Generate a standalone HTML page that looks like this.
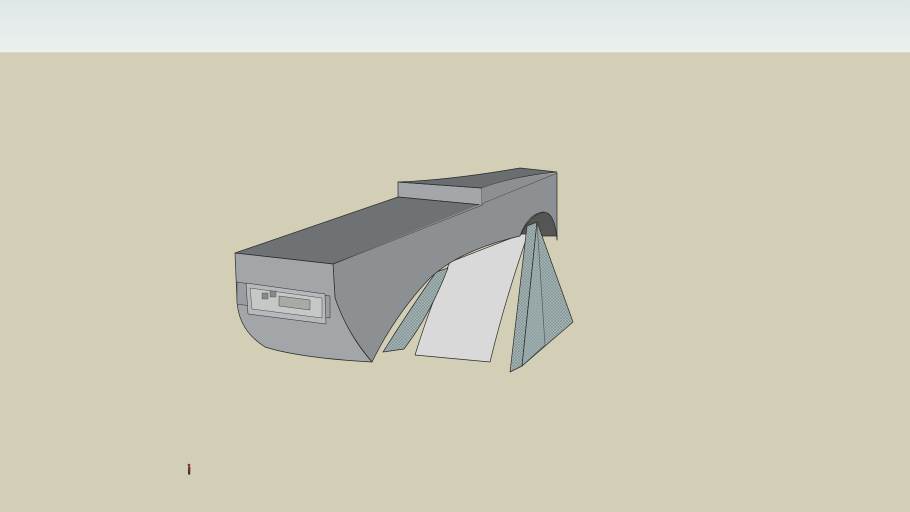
<!DOCTYPE html>
<html><head><style>
html,body{margin:0;padding:0;width:910px;height:512px;overflow:hidden;background:#d2cfb6;}
</style></head><body>
<svg width="910" height="512" viewBox="0 0 910 512" xmlns="http://www.w3.org/2000/svg">
<defs>
<linearGradient id="sky" x1="0" y1="0" x2="0" y2="1"><stop offset="0" stop-color="#dfe7e6"/><stop offset="1" stop-color="#ebf0ef"/></linearGradient>
<pattern id="hatch" width="3" height="3" patternUnits="userSpaceOnUse"><rect width="3" height="3" fill="#a9b8b8"/><path d="M0 0L3 3M3 0L0 3" stroke="#7f9090" stroke-width="0.6"/></pattern>
</defs>
<rect x="0" y="0" width="910" height="52" fill="url(#sky)"/>
<rect x="0" y="52" width="910" height="1" fill="#d8d8cc"/>
<rect x="0" y="53" width="910" height="459" fill="#d2cfb6"/>
<g stroke="#2a2a2a" stroke-width="0.7" stroke-linejoin="round">
<path d="M520 236 Q530 214 545 212 Q556 214 557 240 L557 236 Z" fill="#555"/>
<!-- white central panel -->
<path d="M415 355 Q432 300 450 262 L522 234 L528 234 Q505 300 490 362 Z" fill="#d9d9d9"/>
<!-- left hatched sail -->
<path d="M383 352 L404 349 Q430 315 448 268 L436 272 Q408 312 383 352 Z" fill="url(#hatch)"/>
<!-- right pyramid -->
<path d="M510 372 L522 366 L537 222 L527 226 Z" fill="url(#hatch)"/>
<path d="M522 366 L573 322 L537 222 Z" fill="url(#hatch)"/>
<path d="M522 366 L545 345 L537 222 Z" fill="#9aabab" opacity="0.6"/>
<!-- right side face -->
<path d="M333 264 L557 173 L557 240 Q555 212 543 212 Q528 214 520 236 Q460 250 430 278 Q395 315 372 362 Q345 330 335 298 Z" fill="#8c9093"/>
<!-- raised block -->
<path d="M398 182 L482 188 L482 205 L398 197 Z" fill="#a3a7aa"/>
<path d="M398 182 Q450 180 520 168 L557 172 Q515 176 482 188 Z" fill="#6a6e71"/>
<!-- main top -->
<path d="M235 253 L398 197 L482 205 L333 264 Z" fill="#6e7275"/>
<path d="M482 205 L482 188 Q515 176 557 173 L333 264 Z" fill="#8c9093" stroke="none"/>
<!-- front face -->
<path d="M235 253 L333 264 L335 298 Q348 335 372 362 Q300 358 265 347 Q238 330 237 300 Z" fill="#a2a6a9"/>
<!-- window -->
<path d="M237 282 L330 296 L330 318 L237 304 Z" fill="#9a9ea1" stroke-width="0.5"/>
<path d="M246 283 L325 294 L326 324 L248 314 Z" fill="#b6b9bb" stroke-width="0.5"/>
<path d="M250 288 L322 298 L322 318 L252 309 Z" fill="#c6c8c8" stroke-width="0.4"/>
<path d="M279 296 L310 300 L310 310 L279 306 Z" fill="#a8aaa8" stroke-width="0.4"/>
<path d="M262 293 L268 293 L268 299 L262 299 Z M270 291 L276 291 L276 297 L270 297 Z" fill="#888" stroke-width="0.3"/>
</g>
<g>
<circle cx="189" cy="465" r="1.3" fill="#6b3a2a"/>
<rect x="188" y="466.5" width="2.4" height="4" fill="#8a2a2a"/>
<rect x="188" y="470.5" width="2.2" height="4" fill="#333"/>
</g>
</svg>
</body></html>
